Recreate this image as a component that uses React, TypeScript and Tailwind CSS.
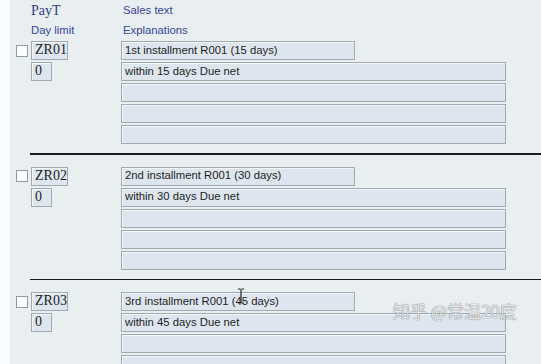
import React from "react";

const sans = "font-['Liberation_Sans',Arial,sans-serif]";
const serif = "font-['Liberation_Serif','Times_New_Roman',serif]";

function Field({ w, text, code }: { w: string; text?: string; code?: boolean }) {
  return (
    <div
      className={`${w} h-[19px] bg-[#dde6ee] border border-[#a2aab0] shadow-[inset_1px_1px_0_#f2f6f9] flex items-center pl-[3px] text-[#1e1e1e] leading-none whitespace-nowrap overflow-hidden ${code ? serif + " text-[14px] font-normal pb-[1px]" : sans + " text-[11.3px]"}`}
    >
      {text}
    </div>
  );
}

function Block({ code, sales, expl, last }: { code: string; sales: string; expl: string; last?: boolean }) {
  return (
    <div className="flex flex-col">
      <div className="flex pl-[5px]">
        <div className="w-[105px] flex flex-col gap-[2px]">
          <div className="flex items-center h-[19px]">
            <div className="w-[12px] h-[12px] bg-white border border-[#8e9aa4] mr-[3px]" />
            <Field w="w-[37px]" text={code} code />
          </div>
          <div className="pl-[15px]">
            <Field w="w-[21px]" text="0" code />
          </div>
        </div>
        <div className="flex flex-col gap-[2px]">
          <Field w="w-[234px]" text={sales} />
          <Field w="w-[385px]" text={expl} />
          <Field w="w-[385px]" />
          <Field w="w-[385px]" />
          <Field w="w-[385px]" />
        </div>
      </div>
      {!last && (
        <div className="pl-[19px] pt-[9px] pb-[12px]">
          <div className="h-[1.5px] bg-[#1a1a1a]" />
        </div>
      )}
    </div>
  );
}

export default function App() {
  return (
    <div className="w-[541px] h-[364px] overflow-hidden flex bg-white relative">
      <div className="w-[11px] bg-[#fbfcfd] border-r border-[#e3e8ec]" />
      <div className="flex-1 bg-[#e9eef1] flex flex-col">
        <div className={`flex ${sans} text-[11.3px] text-[#3545a2]`}>
          <div className="w-[110px] pl-[20px] flex flex-col">
            <div className={`h-[20px] flex items-center ${serif} text-[14px] text-[#2c3c86]`}>PayT</div>
            <div className="h-[21px] flex items-center">Day limit</div>
          </div>
          <div className="flex flex-col pl-[2px]">
            <div className="h-[20px] flex items-center">Sales text</div>
            <div className="h-[21px] flex items-center">Explanations</div>
          </div>
        </div>
        <Block code="ZR01" sales="1st installment R001 (15 days)" expl="within 15 days Due net" />
        <Block code="ZR02" sales="2nd installment R001 (30 days)" expl="within 30 days Due net" />
        <Block code="ZR03" sales="3rd installment R001 (45 days)" expl="within 45 days Due net" last />
      </div>
      <svg className="absolute left-[237px] top-[288px]" width="8" height="16" viewBox="0 0 8 16">
        <path d="M1 1h2.5M4.5 1H7M4 1.5v13M1 15h2.5M4.5 15H7" stroke="#222" strokeWidth="1.2" fill="none" />
      </svg>
      <div className="absolute left-[393px] top-[302px] text-[17px] leading-none text-white/80 font-['Noto_Sans_CJK_SC',sans-serif] [text-shadow:0_0_1px_#7a8086,0_0_1px_#7a8086]">
        知乎 @常温20度
      </div>
    </div>
  );
}
